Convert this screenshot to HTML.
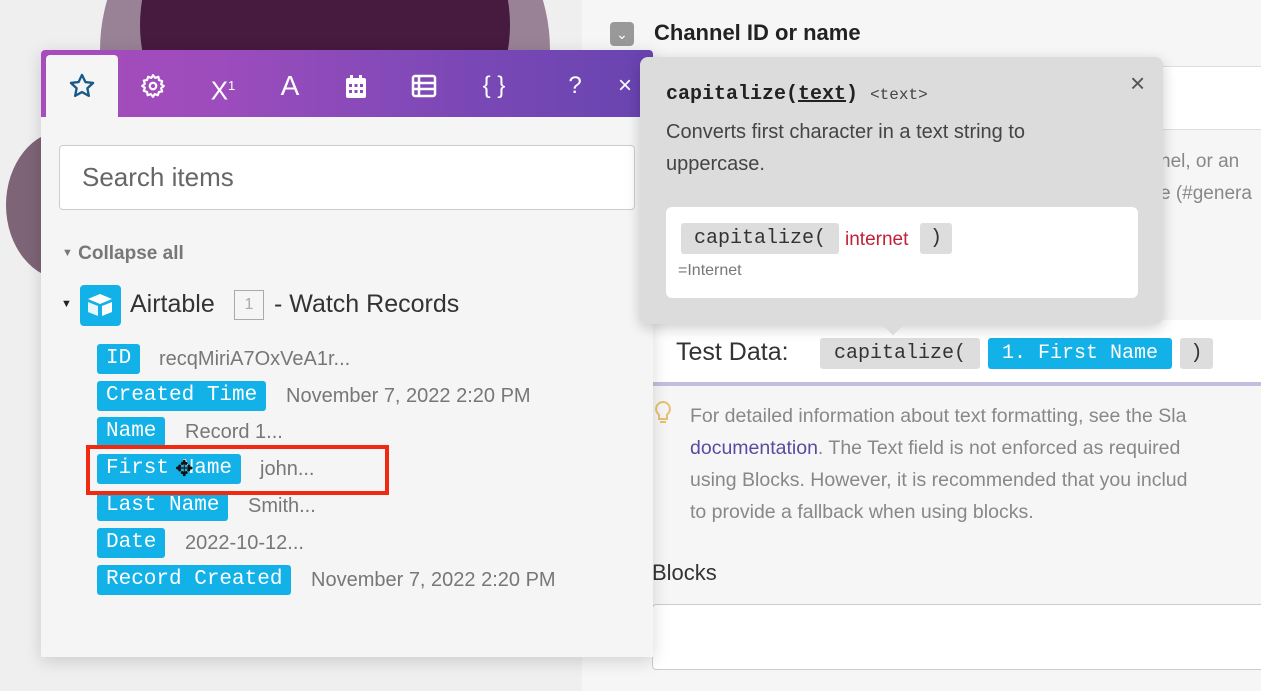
<!DOCTYPE html>
<html><head><meta charset="utf-8"><style>
*{margin:0;padding:0;box-sizing:border-box}
body{width:1261px;height:691px;overflow:hidden;position:relative;background:#efefef;font-family:"Liberation Sans",sans-serif}
.abs{position:absolute}
.pill{position:absolute;left:97px;height:30px;background:#12b1e8;color:#fff;font-family:"Liberation Mono",monospace;font-size:21px;line-height:30px;padding:0 9px;border-radius:3px}
.val{position:absolute;font-size:20px;color:#777;line-height:30px}
.mono{font-family:"Liberation Mono",monospace}
.ti{position:absolute;top:70px;color:#fff;font-size:24px;line-height:32px;text-align:center;width:40px}
</style></head><body>
<div class="abs" style="left:100px;top:-150px;width:450px;height:400px;border-radius:50%;background:#9a8296"></div>
<div class="abs" style="left:140px;top:-140px;width:370px;height:330px;border-radius:50%;background:#471a3f"></div>
<div class="abs" style="left:6px;top:130px;width:120px;height:150px;border-radius:50%;background:#7d6477"></div>
<div class="abs" style="left:582px;top:0;width:679px;height:691px;background:#f6f6f6"></div>
<div class="abs" style="left:610px;top:22px;width:24px;height:24px;border-radius:4px;background:#999;color:#fff;font-size:14px;text-align:center;line-height:24px">&#8964;</div>
<div class="abs" style="left:654px;top:20px;font-size:22px;font-weight:bold;color:#222">Channel ID or name</div>
<div class="abs" style="left:1140px;top:66px;width:130px;height:64px;background:#fff;border:1px solid #ddd"></div>
<div class="abs" style="left:1160px;top:146px;font-size:19px;color:#888;line-height:32px">nel, or an<br>e (#genera</div>
<div class="abs" style="left:653px;top:320px;width:610px;height:66px;background:#fff;border-bottom:4px solid #c4bde0"></div>
<div class="abs" style="left:676px;top:338px;font-size:25px;color:#333">Test Data:</div>
<div class="abs mono" style="left:820px;top:338px;height:31px;width:160px;text-align:center;background:#ddd;color:#333;font-size:20px;line-height:31px;border-radius:3px">capitalize(</div>
<div class="abs mono" style="left:988px;top:338px;height:31px;width:184px;text-align:center;background:#12b1e8;color:#fff;font-size:20px;line-height:31px;border-radius:3px">1. First Name</div>
<div class="abs mono" style="left:1180px;top:338px;height:31px;width:33px;background:#ddd;color:#333;font-size:20px;line-height:31px;text-align:center;border-radius:3px">)</div>
<svg class="abs" style="left:654px;top:400px" width="18" height="26" viewBox="0 0 18 26"><path d="M9 2a7 7 0 0 0-4 12.7V19h8v-4.3A7 7 0 0 0 9 2z" fill="none" stroke="#e8c070" stroke-width="2"/><path d="M6 22h6" stroke="#e8c070" stroke-width="2"/></svg>
<div class="abs" style="left:690px;top:400px;font-size:19.5px;color:#888;line-height:32px;white-space:nowrap">For detailed information about text formatting, see the Sla<br><span style="color:#5a4aa0">documentation</span>. The Text field is not enforced as required<br>using Blocks. However, it is recommended that you includ<br>to provide a fallback when using blocks.</div>
<div class="abs" style="left:652px;top:560px;font-size:22px;color:#333">Blocks</div>
<div class="abs" style="left:652px;top:604px;width:620px;height:66px;background:#fff;border:1px solid #ccc;border-radius:4px"></div>
<div class="abs" style="left:41px;top:50px;width:612px;height:607px;background:#f5f5f5;box-shadow:0 4px 16px rgba(0,0,0,.15)"></div>
<div class="abs" style="left:41px;top:50px;width:612px;height:67px;background:linear-gradient(90deg,#a84cbd,#9c4cbc 30%,#7a48b6 70%,#6844b0);border-radius:4px 4px 0 0"></div>
<div class="abs" style="left:46px;top:55px;width:72px;height:62px;background:#f5f5f5;border-radius:4px 4px 0 0"></div>
<svg class="abs" style="left:68px;top:72px" width="28" height="28" viewBox="0 0 24 24"><path d="M12 2.5l2.9 6.1 6.6.8-4.9 4.5 1.3 6.6L12 17.2l-5.9 3.3 1.3-6.6-4.9-4.5 6.6-.8z" fill="none" stroke="#1a5a8a" stroke-width="2" stroke-linejoin="round"/></svg>
<svg class="abs" style="left:140px;top:73px" width="26" height="26" viewBox="0 0 24 24"><circle cx="12" cy="12" r="3" fill="none" stroke="#fff" stroke-width="2"/><path d="M12 2l2 2.5 3-1 .5 3 3 1-1 3L22 12l-2.5 2 1 3-3 .5-1 3-3-1L12 22l-2-2.5-3 1-.5-3-3-1 1-3L2 12l2.5-2-1-3 3-.5 1-3 3 1z" fill="none" stroke="#fff" stroke-width="2" stroke-linejoin="round"/></svg>
<div class="ti" style="left:203px;font-size:26px">X<sup style="font-size:13px">1</sup></div>
<div class="ti" style="left:270px;font-size:28px">A</div>
<svg class="abs" style="left:344px;top:74px" width="24" height="26" viewBox="0 0 24 26"><rect x="2" y="4" width="20" height="20" rx="2" fill="#fff"/><rect x="6" y="1" width="3" height="5" fill="#fff"/><rect x="15" y="1" width="3" height="5" fill="#fff"/><g fill="#8a4abb"><rect x="5" y="10" width="3" height="3"/><rect x="10.5" y="10" width="3" height="3"/><rect x="16" y="10" width="3" height="3"/><rect x="5" y="16" width="3" height="3"/><rect x="10.5" y="16" width="3" height="3"/><rect x="16" y="16" width="3" height="3"/></g></svg>
<svg class="abs" style="left:411px;top:74px" width="26" height="24" viewBox="0 0 26 24"><rect x="2" y="2" width="22" height="20" rx="2" fill="none" stroke="#fff" stroke-width="2.5"/><path d="M2 9h22M2 15h22M8 2v20" stroke="#fff" stroke-width="2.5"/></svg>
<div class="ti" style="left:474px;font-size:24px">{ }</div>
<div class="ti" style="left:555px">?</div>
<div class="ti" style="left:605px;width:40px">×</div>
<div class="abs" style="left:59px;top:145px;width:576px;height:65px;background:#fff;border:1px solid #ccc;border-radius:4px;font-size:26px;color:#666;line-height:63px;padding-left:22px">Search items</div>
<div class="abs" style="left:62px;top:243px;font-size:19px;font-weight:bold;color:#777"><span style="font-size:11px;vertical-align:3px">▼</span> Collapse all</div>
<div class="abs" style="left:61px;top:298px;font-size:11px;color:#222">▼</div>
<div class="abs" style="left:80px;top:285px;width:41px;height:41px;background:#12b1e8;border-radius:4px"></div>
<svg class="abs" style="left:85px;top:291px" width="31" height="28" viewBox="0 0 31 28"><path d="M15 3l12 5-12 5-12-5z" fill="#fff"/><path d="M3 11l10 4v10l-10-4z" fill="#fff" opacity=".9"/><path d="M17 15l10-4v10l-10 4z" fill="#fff"/></svg>
<div class="abs" style="left:130px;top:290px;font-size:25px;color:#333">Airtable</div>
<div class="abs" style="left:234px;top:290px;width:30px;height:30px;border:1px solid #aaa;color:#aaa;font-size:16px;text-align:center;line-height:28px">1</div>
<div class="abs" style="left:274px;top:290px;font-size:25px;color:#333">- Watch Records</div>
<div class="pill" style="top:344px">ID</div><div class="val" style="left:159px;top:344px">recqMiriA7OxVeA1r...</div>
<div class="pill" style="top:381px">Created Time</div><div class="val" style="left:286px;top:381px">November 7, 2022 2:20 PM</div>
<div class="pill" style="top:417px">Name</div><div class="val" style="left:185px;top:417px">Record 1...</div>
<div class="pill" style="top:454px">First Name</div><div class="val" style="left:260px;top:454px">john...</div>
<div class="pill" style="top:491px">Last Name</div><div class="val" style="left:248px;top:491px">Smith...</div>
<div class="pill" style="top:528px">Date</div><div class="val" style="left:185px;top:528px">2022-10-12...</div>
<div class="pill" style="top:565px">Record Created</div><div class="val" style="left:311px;top:565px">November 7, 2022 2:20 PM</div>
<div class="abs" style="left:86px;top:445px;width:303px;height:50px;border:4px solid #f02a10"></div>
<div class="abs" style="left:175px;top:456px;font-size:22px;color:#111">✥</div>
<div class="abs" style="left:640px;top:57px;width:523px;height:267px;background:#dcdcdc;border-radius:8px;box-shadow:0 4px 14px rgba(0,0,0,.2)"></div>
<div class="abs" style="left:885px;top:316px;width:16px;height:16px;background:#dcdcdc;transform:rotate(45deg)"></div>
<div class="abs" style="left:1130px;top:68px;font-size:26px;color:#555">×</div>
<div class="abs mono" style="left:666px;top:83px;font-size:20px;font-weight:bold;color:#222">capitalize(<u>text</u>) <span style="font-weight:normal;font-size:16px;color:#444">&lt;text&gt;</span></div>
<div class="abs" style="left:666px;top:116px;font-size:20px;color:#444;line-height:32px">Converts first character in a text string to<br>uppercase.</div>
<div class="abs" style="left:666px;top:207px;width:472px;height:91px;background:#fff;border-radius:6px"></div>
<div class="abs mono" style="left:681px;top:223px;height:31px;width:158px;text-align:center;background:#ddd;color:#333;font-size:20px;line-height:31px;border-radius:3px">capitalize(</div>
<div class="abs" style="left:845px;top:229px;font-size:19px;color:#c0203a">internet</div>
<div class="abs mono" style="left:920px;top:223px;width:32px;height:31px;background:#ddd;color:#333;font-size:20px;line-height:31px;text-align:center;border-radius:3px">)</div>
<div class="abs" style="left:678px;top:262px;font-size:16px;color:#777">=Internet</div>
</body></html>
